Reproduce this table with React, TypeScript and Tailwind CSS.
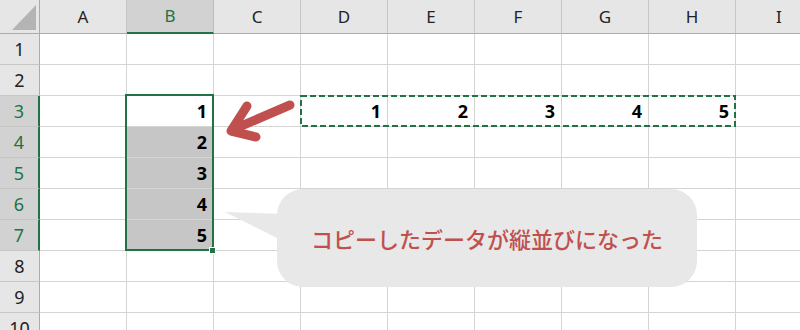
import React from 'react';

const cols = ['A', 'B', 'C', 'D', 'E', 'F', 'G', 'H', 'I'];
const rows = [1, 2, 3, 4, 5, 6, 7, 8, 9, 10];

// values by row/col
const values: Record<string, string> = {
  'B3': '1', 'B4': '2', 'B5': '3', 'B6': '4', 'B7': '5',
  'D3': '1', 'E3': '2', 'F3': '3', 'G3': '4', 'H3': '5',
};

const inSel = (r: number) => r >= 3 && r <= 7;

const App: React.FC = () => {
  return (
    <div className="relative w-[800px] h-[330px] overflow-hidden bg-white" style={{ fontFamily: '"Noto Sans", "Noto Sans CJK JP", sans-serif' }}>
      {/* header row */}
      <div className="flex h-[34px]">
        <div className="w-[40px] shrink-0 h-full bg-[#e6e6e6] border-r border-b border-[#ababab] flex items-end justify-end pr-[3px] pb-[3px]">
          <svg width="24" height="25" viewBox="0 0 24 25">
            <polygon points="0,25 24,25 24,0" fill="#b4b4b4" />
          </svg>
        </div>
        {cols.map((c) => (
          <div
            key={c}
            className={
              c === 'B'
                ? 'w-[87px] shrink-0 h-full bg-[#d2d2d2] border-r border-[#bdbdbd] border-b-2 border-b-[#217346] flex items-center justify-center text-[17px] text-[#217346]'
                : 'w-[87px] shrink-0 h-full bg-[#e6e6e6] border-r border-[#c6c6c6] border-b border-b-[#ababab] flex items-center justify-center text-[17px] text-[#222]'
            }
          >
            {c}
          </div>
        ))}
      </div>

      {rows.map((r) => (
        <div key={r} className="flex h-[31px]">
          <div
            className={
              inSel(r)
                ? 'w-[40px] shrink-0 h-full bg-[#d2d2d2] border-b border-[#c6c6c6] border-r-2 border-r-[#217346] flex items-center justify-center text-[18px] text-[#217346]'
                : 'w-[40px] shrink-0 h-full bg-[#e6e6e6] border-b border-[#c6c6c6] border-r border-r-[#ababab] flex items-center justify-center text-[18px] text-[#222]'
            }
          >
            {r}
          </div>
          {cols.map((c) => {
            const v = values[c + r];
            const gray = c === 'B' && r >= 4 && r <= 7;
            return (
              <div
                key={c}
                className={
                  (gray ? 'bg-[#c6c6c6] ' : 'bg-white ') +
                  'w-[87px] shrink-0 h-full border-r border-b border-[#d4d4d4] flex items-center justify-end pr-[6px] text-[18px] font-bold text-black'
                }
              >
                {v}
              </div>
            );
          })}
        </div>
      ))}

      {/* selection border B3:B7 */}
      <div className="absolute left-[125px] top-[94px] w-[89px] h-[157px] border-2 border-[#217346]" />
      <div className="absolute left-[209px] top-[247px] w-[7px] h-[7px] bg-[#217346] border border-white" />

      {/* copy marquee + arrow */}
      <svg className="absolute left-0 top-0" width="800" height="330">
        <rect x="301" y="96" width="434" height="30" fill="none" stroke="#217346" strokeWidth="2" strokeDasharray="6 3" />
        <g stroke="#c0504d" strokeWidth="9" strokeLinecap="round" strokeLinejoin="round" fill="none">
          <line x1="290" y1="105" x2="232" y2="130" />
          <polyline points="247,106 231,131 256,137" />
        </g>
        {/* callout tail */}
        <polygon points="225,212 285,214 285,242" fill="#e8e8e8" />
      </svg>

      {/* callout */}
      <div className="absolute left-[277px] top-[189px] w-[420px] h-[98px] rounded-[26px] bg-[#e8e8e8] flex items-center justify-center">
        <span className="text-[22px] font-medium text-[#c0504d]" style={{ fontFamily: '"Noto Sans CJK JP", sans-serif' }}>
          コピーしたデータが縦並びになった
        </span>
      </div>
    </div>
  );
};

export default App;
